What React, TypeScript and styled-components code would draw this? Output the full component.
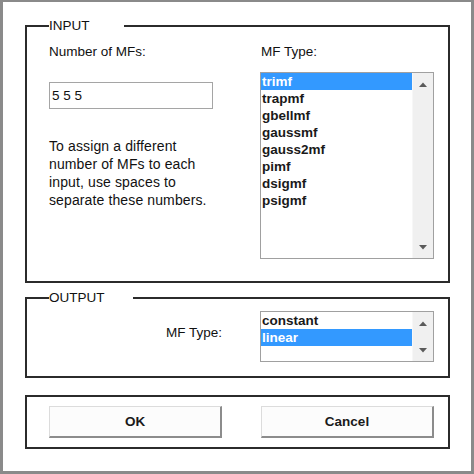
import React from "react";
import styled, { createGlobalStyle } from "styled-components";

const Global = createGlobalStyle`
  html, body { margin: 0; padding: 0; background: #ffffff; }
  body { font-family: "Liberation Sans", Arial, sans-serif; color: #111; }
  * { box-sizing: border-box; }
`;

const Frame = styled.div`
  width: 474px;
  height: 474px;
  background: #ffffff;
  border: 3px solid #8a8a8a;
  border-top-width: 2px;
  padding: 16px 21px 21px 22px;
  display: flex;
  flex-direction: column;
`;

const Group = styled.fieldset<{ $pt: number; $pb: number; $mt?: number }>`
  margin: ${(p) => p.$mt ?? 0}px 0 0 0;
  min-width: 0;
  border: 2px solid #2b2b2b;
  padding: ${(p) => p.$pt}px 14px ${(p) => p.$pb}px 22px;
`;

const Legend = styled.legend<{ $trail: number }>`
  padding: 0 ${(p) => p.$trail}px 0 0;
  font-size: 13.5px;
  line-height: 16px;
  height: 16px;
  color: #111;
`;

const InputGrid = styled.div`
  display: grid;
  grid-template-columns: 211px 174px;
  align-items: start;
`;

const Column = styled.div`
  display: flex;
  flex-direction: column;
`;

const Label = styled.div<{ $indent?: number }>`
  font-size: 13.5px;
  line-height: 16px;
  color: #111;
  padding-left: ${(p) => p.$indent ?? 0}px;
  white-space: nowrap;
`;

const TextBox = styled.div`
  margin-top: 22px;
  width: 164px;
  height: 27px;
  border: 1px solid #a5a5a5;
  padding-left: 2px;
  display: flex;
  align-items: center;
  font-size: 13.5px;
  color: #111;
`;

const Hint = styled.p`
  margin: 28px 0 0 0;
  font-size: 14px;
  letter-spacing: 0.12px;
  line-height: 18px;
  color: #111;
  white-space: nowrap;
`;

const ListBox = styled.div<{ $h: number; $mt: number }>`
  margin-top: ${(p) => p.$mt}px;
  width: 174px;
  height: ${(p) => p.$h}px;
  border: 1px solid #a0a0a0;
  display: flex;
  background: #fff;
`;

const Items = styled.div`
  flex: 1;
  display: flex;
  flex-direction: column;
  overflow: hidden;
`;

const Item = styled.div<{ $sel?: boolean }>`
  height: 17px;
  line-height: 17px;
  padding-left: 1px;
  font-size: 13.5px;
  font-weight: bold;
  color: ${(p) => (p.$sel ? "#ffffff" : "#1a1a1a")};
  background: ${(p) => (p.$sel ? "#3399ff" : "transparent")};
  white-space: nowrap;
`;

const ScrollBar = styled.div`
  width: 21px;
  background: #f0f0f0;
  border-left: 1px solid #f7f7f7;
  display: flex;
  flex-direction: column;
  justify-content: space-between;
  align-items: center;
  padding: 9px 0 8px 0;
`;

const Arrow = ({ up }: { up?: boolean }) => (
  <svg width="8" height="5" viewBox="0 0 8 5">
    <path d={up ? "M0 5 L4 0.5 L8 5 Z" : "M0 0 L4 4.5 L8 0 Z"} fill="#5a5a5a" />
  </svg>
);

const OutputRow = styled.div`
  display: flex;
  align-items: flex-start;
`;

const OutputLabel = styled(Label)`
  width: 211px;
  margin-top: 14px;
`;

const ButtonRow = styled.div`
  display: flex;
  gap: 39px;
`;

const Button = styled.button`
  width: 173px;
  height: 32px;
  background: #fcfcfc;
  border-style: solid;
  border-width: 1px 2px 2px 1px;
  border-color: #dcdcdc #8c8c8c #8c8c8c #dcdcdc;
  font-family: "Liberation Sans", Arial, sans-serif;
  font-size: 13.5px;
  font-weight: bold;
  color: #1a1a1a;
  padding: 0;
  cursor: pointer;
`;

const inputTypes = ["trimf", "trapmf", "gbellmf", "gaussmf", "gauss2mf", "pimf", "dsigmf", "psigmf"];
const outputTypes = ["constant", "linear"];

export default function App() {
  return (
    <>
      <Global />
      <Frame>
        <Group $pt={10} $pb={22}>
          <Legend $trail={34}>INPUT</Legend>
          <InputGrid>
            <Column>
              <Label>Number of MFs:</Label>
              <TextBox>5 5 5</TextBox>
              <Hint>
                To assign a different
                <br />
                number of MFs to each
                <br />
                input, use spaces to
                <br />
                separate these numbers.
              </Hint>
            </Column>
            <Column>
              <Label $indent={1}>MF Type:</Label>
              <ListBox $h={187} $mt={12}>
                <Items>
                  {inputTypes.map((t, i) => (
                    <Item key={t} $sel={i === 0}>
                      {t}
                    </Item>
                  ))}
                </Items>
                <ScrollBar>
                  <Arrow up />
                  <Arrow />
                </ScrollBar>
              </ListBox>
            </Column>
          </InputGrid>
        </Group>

        <Group $pt={5} $pb={14} $mt={7}>
          <Legend $trail={28}>OUTPUT</Legend>
          <OutputRow>
            <OutputLabel $indent={117}>MF Type:</OutputLabel>
            <ListBox $h={51} $mt={0}>
              <Items>
                {outputTypes.map((t, i) => (
                  <Item key={t} $sel={i === 1}>
                    {t}
                  </Item>
                ))}
              </Items>
              <ScrollBar>
                <Arrow up />
                <Arrow />
              </ScrollBar>
            </ListBox>
          </OutputRow>
        </Group>

        <Group $pt={9} $pb={9} $mt={17}>
          <ButtonRow>
            <Button>OK</Button>
            <Button>Cancel</Button>
          </ButtonRow>
        </Group>
      </Frame>
    </>
  );
}
